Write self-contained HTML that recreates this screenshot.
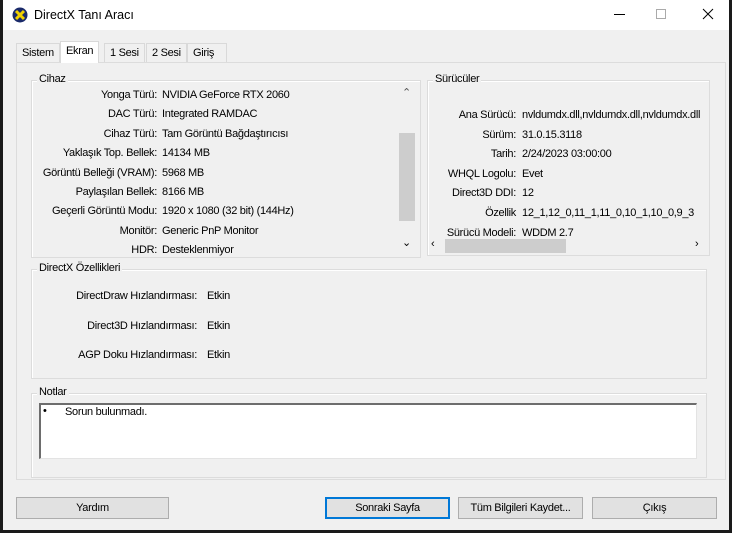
<!DOCTYPE html><html><head><meta charset="utf-8"><style>
*{margin:0;padding:0;box-sizing:border-box}
body{width:732px;height:533px;background:#1a1a1a;font-family:"Liberation Sans",sans-serif;font-size:11px;letter-spacing:-0.3px;color:#000;position:relative;overflow:hidden}
.win{position:absolute;left:3px;top:0;width:726px;height:530px;background:#f0f0f0}
.title{position:absolute;left:0;top:0;width:726px;height:30px;background:#fff}
.a{position:absolute;white-space:nowrap}
.r{text-align:right}
.grp{position:absolute;border:1px solid #dcdcdc;box-shadow:inset 1px 1px #fff}
.lg{position:absolute;background:#f0f0f0;padding:0 2px;top:-8px;left:5px;color:#000}
.btn{position:absolute;top:497px;height:22px;border:1px solid #adadad;background:#e1e1e1;text-align:center;line-height:20px}
.tab{position:absolute;top:43px;height:19px;border:1px solid #d9d9d9;border-bottom:none;background:#f0f0f0;line-height:18px;padding:0 5px}
</style></head><body><div class="win">
<div class="title">
<svg class="a" style="left:9px;top:7px" width="16" height="16" viewBox="0 0 16 16"><circle cx="8" cy="8" r="7.5" fill="#1a2a6a"/><path d="M4 4L12 12M12 4L4 12" stroke="#f0d000" stroke-width="3"/></svg>
<div class="a" style="left:31px;top:8px;font-size:12.5px;letter-spacing:0">DirectX Tanı Aracı</div>
<div class="a" style="left:611px;top:14px;width:11px;height:1px;background:#000"></div>
<div class="a" style="left:653px;top:9px;width:10px;height:10px;border:1px solid #aaa"></div>
<svg class="a" style="left:699px;top:8px" width="12" height="12"><path d="M1 1L11 11M11 1L1 11" stroke="#000"/></svg>
</div>
<div class="a" style="left:13px;top:62px;width:710px;height:418px;background:#fff;border:1px solid #dcdcdc"></div>
<div class="a" style="left:14px;top:63px;width:708px;height:416px;background:#f0f0f0"></div>
<div class="tab" style="left:13px">Sistem</div>
<div class="tab" style="left:57px;top:41px;height:22px;background:#fff;z-index:2">Ekran</div>
<div class="tab" style="left:101px">1 Sesi</div>
<div class="tab" style="left:143px">2 Sesi</div>
<div class="tab" style="left:184px;padding-right:12px">Giriş</div>

<div class="grp" style="left:28px;top:80px;width:390px;height:178px"><span class="lg">Cihaz</span></div>
<div class="a" style="left:395px;top:85px;width:18px;height:169px;background:#f0f0f0"></div>
<div class="a" style="left:396px;top:133px;width:16px;height:88px;background:#cdcdcd"></div>
<div class="a" style="left:399px;top:86px;font-size:11px;color:#555">&#8963;</div>
<div class="a" style="left:399px;top:236px;font-size:11px">&#8964;</div>
<div class="a r" style="left:20px;width:134px;top:86px;line-height:19.4px">Yonga Türü:<br>DAC Türü:<br>Cihaz Türü:<br>Yaklaşık Top. Bellek:<br>Görüntü Belleği (VRAM):<br>Paylaşılan Bellek:<br>Geçerli Görüntü Modu:<br>Monitör:<br>HDR:</div>
<div class="a" style="left:159px;top:86px;line-height:19.4px">NVIDIA GeForce RTX 2060<br>Integrated RAMDAC<br>Tam Görüntü Bağdaştırıcısı<br>14134 MB<br>5968 MB<br>8166 MB<br>1920 x 1080 (32 bit) (144Hz)<br>Generic PnP Monitor<br>Desteklenmiyor</div>

<div class="grp" style="left:424px;top:80px;width:283px;height:176px"><span class="lg">Sürücüler</span></div>
<div class="a r" style="left:420px;width:93px;top:106px;line-height:19.6px">Ana Sürücü:<br>Sürüm:<br>Tarih:<br>WHQL Logolu:<br>Direct3D DDI:<br>Özellik<br>Sürücü Modeli:</div>
<div class="a" style="left:519px;top:106px;line-height:19.6px;width:185px;overflow:hidden">nvldumdx.dll,nvldumdx.dll,nvldumdx.dll<br>31.0.15.3118<br>2/24/2023 03:00:00<br>Evet<br>12<br>12_1,12_0,11_1,11_0,10_1,10_0,9_3<br>WDDM 2.7</div>
<div class="a" style="left:426px;top:238px;width:279px;height:16px;background:#f0f0f0"></div>
<div class="a" style="left:442px;top:239px;width:121px;height:14px;background:#cdcdcd"></div>
<div class="a" style="left:428px;top:238px;font-size:11px">&#8249;</div>
<div class="a" style="left:692px;top:238px;font-size:11px">&#8250;</div>

<div class="grp" style="left:28px;top:269px;width:676px;height:110px"><span class="lg">DirectX Özellikleri</span></div>
<div class="a r" style="left:40px;width:154px;top:282px;line-height:29.5px">DirectDraw Hızlandırması:<br>Direct3D Hızlandırması:<br>AGP Doku Hızlandırması:</div>
<div class="a" style="left:204px;top:282px;line-height:29.5px">Etkin<br>Etkin<br>Etkin</div>

<div class="grp" style="left:28px;top:393px;width:676px;height:85px"><span class="lg">Notlar</span></div>
<div class="a" style="left:36px;top:403px;width:658px;height:56px;background:#fff;border-top:2px solid #6d6d6d;border-left:2px solid #6d6d6d;border-right:1px solid #e3e3e3;border-bottom:1px solid #e3e3e3"></div>
<div class="a" style="left:40px;top:405px">•</div>
<div class="a" style="left:62px;top:406px">Sorun bulunmadı.</div>

<div class="btn" style="left:13px;width:153px">Yardım</div>
<div class="btn" style="left:322px;width:125px;border:2px solid #0078d7;line-height:18px">Sonraki Sayfa</div>
<div class="btn" style="left:455px;width:125px">Tüm Bilgileri Kaydet...</div>
<div class="btn" style="left:589px;width:125px">Çıkış</div>
</div></body></html>
